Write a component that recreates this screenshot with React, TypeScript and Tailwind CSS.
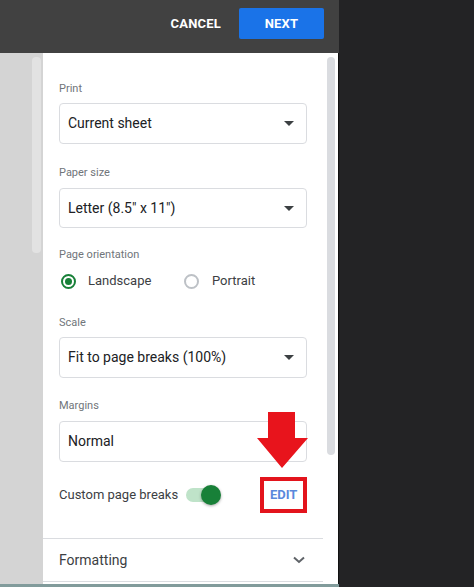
import React from "react";

function Caret() {
  return (
    <svg width="10" height="5" viewBox="0 0 10 5" className="shrink-0">
      <path d="M0 0 L10 0 L5 5 Z" fill="#3c4043" />
    </svg>
  );
}

function Select({ value, top, h = 41 }: { value: string; top: number; h?: number }) {
  return (
    <div
      className="flex items-center justify-between border border-[#dadce0] rounded-[4px] pl-[8px] pr-[12px] bg-white"
      style={{ marginTop: top, height: h }}
    >
      <span className="text-[14px] text-[#202124]">{value}</span>
      <Caret />
    </div>
  );
}

function Label({ text, top }: { text: string; top: number }) {
  return (
    <div className="text-[11px] leading-4 text-[#70757a]" style={{ marginTop: top }}>
      {text}
    </div>
  );
}

export default function App() {
  return (
    <div
      className="flex w-[474px] h-[587px] overflow-hidden bg-[#232325]"
      style={{ fontFamily: "Roboto, 'Noto Sans', Arial, sans-serif" }}
    >
      <div className="flex flex-col w-[339px] h-full">
        {/* header */}
        <div className="flex items-start justify-end h-[53px] bg-[#414141] pr-[15px] pt-[8px]">
          <div className="h-[31px] flex items-center text-white font-bold text-[13px] mr-[18px] tracking-[0.2px]">
            CANCEL
          </div>
          <div className="w-[85px] h-[31px] flex items-center justify-center bg-[#1a73e8] text-white font-bold text-[13px] rounded-[2px] tracking-[0.2px]">
            NEXT
          </div>
        </div>
        {/* body */}
        <div className="flex flex-1 min-h-0">
          <div className="w-[43px] bg-[#d4d4d4] flex justify-end pr-[2px] pt-[4px]">
            <div className="w-[9px] h-[196px] rounded-[4px] bg-[#e2e2e2]" />
          </div>
          <div className="flex flex-1 bg-white border-r border-[#111]">
            <div className="relative w-[280px] flex flex-col">
              <div className="px-[16px] pt-[28px]">
                <Label text="Print" top={0} />
                <Select value="Current sheet" top={6} />
                <Label text="Paper size" top={21} />
                <Select value={'Letter (8.5" x 11")'} top={7} h={40} />
                <Label text="Page orientation" top={19} />
                <div className="flex items-center h-[24px] mt-[6px]">
                  <div className="ml-[2px] w-[15px] h-[15px] rounded-full border-2 border-[#188038] flex items-center justify-center">
                    <div className="w-[7px] h-[7px] rounded-full bg-[#188038]" />
                  </div>
                  <span className="ml-[12px] w-[96px] text-[13px] text-[#3c4043]">Landscape</span>
                  <div className="w-[15px] h-[15px] rounded-full border-2 border-[#bdc1c6]" />
                  <span className="ml-[13px] text-[13px] text-[#3c4043]">Portrait</span>
                </div>
                <Label text="Scale" top={22} />
                <Select value="Fit to page breaks (100%)" top={6} />
                <Label text="Margins" top={20} />
                <Select value="Normal" top={7} />
                <div className="flex items-center h-[36px] mt-[15px]">
                  <span className="w-[128px] text-[13px] text-[#3c4043] whitespace-nowrap">Custom page breaks</span>
                  <div className="relative w-[34px] h-[14px] rounded-full bg-[#bfe3c9]">
                    <div className="absolute right-[-1px] top-[-3px] w-[20px] h-[20px] rounded-full bg-[#188038] shadow-[0_1px_3px_rgba(0,0,0,0.35)]" />
                  </div>
                  <div className="ml-[40px] w-[47px] h-[36px] border-[4px] border-[#e3141c] flex items-center justify-center">
                    <span className="text-[13px] font-bold text-[#5a88dc]">EDIT</span>
                  </div>
                </div>
              </div>
              <div className="mt-[25px] h-px bg-[#dadce0]" />
              <div className="flex items-center justify-between h-[42px] pl-[16px] pr-[18px]">
                <span className="text-[14px] text-[#3c4043]">Formatting</span>
                <svg width="12" height="8" viewBox="0 0 12 8">
                  <path d="M1 1.5 L6 6 L11 1.5" fill="none" stroke="#5f6368" strokeWidth="2" />
                </svg>
              </div>
              <div className="h-px bg-[#dadce0]" />
              {/* red arrow overlay */}
              <svg
                className="absolute left-[214px] top-[359px]"
                width="52"
                height="58"
                viewBox="0 0 52 58"
              >
                <path d="M11 0 L38 0 L38 26 L51 26 L25 56 L0 26 L11 26 Z" fill="#e8141c" />
              </svg>
            </div>
            <div className="flex-1 flex justify-center pt-[4px]">
              <div className="w-[8px] h-[398px] rounded-[4px] bg-[#dadce0]" />
            </div>
          </div>
        </div>
        <div className="h-[3px] bg-[#819b9b]" />
      </div>
      <div className="flex-1" />
    </div>
  );
}
